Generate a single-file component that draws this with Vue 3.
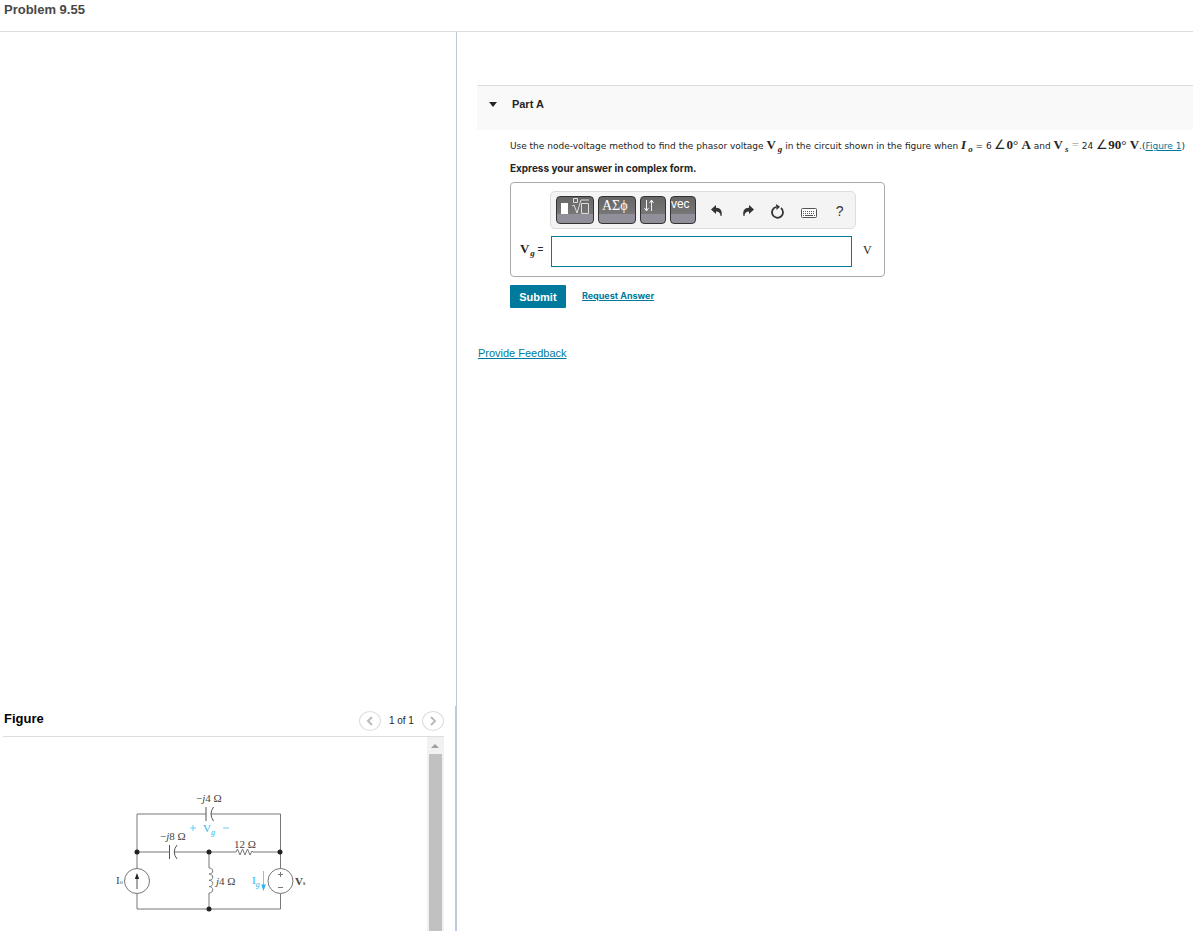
<template>
  <div class="page">
    <header class="page-header">
      <h1>Problem 9.55</h1>
    </header>

    <div class="columns">
      <aside class="left-pane">
        <div class="left-blank"></div>
        <section class="figure-panel">
          <div class="figure-header">
            <h2>Figure</h2>
            <nav class="pager">
              <button type="button" class="pager-btn" aria-label="Previous figure">
                <svg width="8" height="10" viewBox="0 0 8 10"><path d="M6 1 L2 5 L6 9" /></svg>
              </button>
              <span>{{ figureIndex }} of {{ figureCount }}</span>
              <button type="button" class="pager-btn" aria-label="Next figure">
                <svg width="8" height="10" viewBox="0 0 8 10"><path d="M2 1 L6 5 L2 9" /></svg>
              </button>
            </nav>
          </div>
          <div class="figure-body">
            <div class="figure-view">
              <svg class="circuit" width="200" height="130" viewBox="0 0 200 130">
                <g class="wire">
                  <path d="M27 81.500V27H96M101 27H170.500V81.500M27 106.500V122H170.500V106.500" />
                  <path d="M27 65H59.500M64 65H126M143 65H170" />
                  <path d="M126 65l1.500-3 2.500 6 2.500-6 2.500 6 2.500-6 2.500 6 2-4 1 1" />
                  <path d="M99 65V81c5 0 5 6 0 6 5 0 5 6.300 0 6.300 5 0 5 6.300 0 6.300 5 0 5 6.400 0 6.400V122" />
                  <circle cx="27" cy="94" r="12.500" />
                  <circle cx="170.500" cy="94" r="12.500" />
                </g>
                <g class="plate">
                  <path d="M96 20V34M103.500 20Q98.500 27 103.500 34" />
                  <path d="M59.500 58V72M67 58Q61.500 65 67 72" />
                  <path d="M27 102V90" />
                </g>
                <path class="dot" d="M27 86l-2.200 6h4.400z" />
                <circle v-for="node in nodes" :key="node.id" class="dot" :cx="node.x" :cy="node.y" r="2.500" />
                <path class="sign" d="M168 87.500H173M170.500 85V90M168 100.500H173" />
                <g class="label">
                  <text x="86" y="15">−<tspan class="it">j</tspan>4 Ω</text>
                  <text x="50" y="53">−<tspan class="it">j</tspan>8 Ω</text>
                  <text x="124" y="61">12 Ω</text>
                  <text x="106" y="98"><tspan class="it">j</tspan>4 Ω</text>
                  <text x="6" y="97">I<tspan class="sub">o</tspan></text>
                  <text x="185" y="98" class="strong">V<tspan class="sub">s</tspan></text>
                </g>
                <g class="blue">
                  <text x="93" y="45">V<tspan class="it gsub" dy="3">g</tspan></text>
                  <text x="142" y="97">I<tspan class="it gsub" dy="3">g</tspan></text>
                  <path d="M80 41H86M83 38V44M113 41H119M153.500 84V98" />
                  <path class="tip" d="M153.500 104l-2.300-6.500h4.600z" />
                </g>
              </svg>
            </div>
            <div class="scrollbar">
              <div class="scroll-up"></div>
              <div class="scroll-thumb"></div>
            </div>
          </div>
        </section>
      </aside>

      <main class="right-pane">
        <div class="part-header">
          <span class="caret"></span>
          <h2>Part A</h2>
        </div>

        <div class="part-body">
          <p class="question">
            Use the node-voltage method to find the phasor voltage
            <span class="math"><b>V</b><sub>g</sub></span> in the circuit shown in the figure when
            <span class="math"><b><i>I</i></b><sub>o</sub></span> = 6
            <span class="math">∠<b>0</b>° <b>A</b></span> and
            <span class="math"><b>V</b><sub>s</sub> <span class="faint">=</span></span> 24
            <span class="math">∠<b>90</b>° <b>V</b></span>.(<a href="#figure">Figure 1</a>)
          </p>
          <p class="instruction">Express your answer in complex form.</p>

          <form class="answer-box" @submit.prevent>
            <div class="toolbar">
              <button type="button" class="pad wide" aria-label="Templates">
                <svg width="36" height="26" viewBox="0 0 36 26">
                  <rect x="4" y="6" width="7" height="11" fill="#fff" />
                  <path d="M15 9l2-1 3 8 4-13h8M24.500 6.500h7v10h-7zM16.500 1.500h4v4h-4z" fill="none" stroke="#ddd" />
                </svg>
              </button>
              <button type="button" class="pad wide greek">ΑΣϕ</button>
              <button type="button" class="pad narrow" aria-label="Arrows">
                <svg width="24" height="26" viewBox="0 0 24 26">
                  <path d="M5.500 3v11M3.500 11l2 3 2-3M10.500 14V3M8.500 6l2-3 2 3" fill="none" stroke="#eee" />
                </svg>
              </button>
              <button type="button" class="pad narrow vec">vec</button>
              <div class="tools">
                <button type="button" class="tool" aria-label="Undo">
                  <svg width="12" height="14" viewBox="0 0 12 14">
                    <path d="M0 5.500L5 1v2.700c4.500 0 6.500 3 5.500 8.300h-1C9.500 9 8 7.500 5 7.500V10z" fill="#333" />
                  </svg>
                </button>
                <button type="button" class="tool" aria-label="Redo">
                  <svg width="12" height="14" viewBox="0 0 12 14">
                    <path d="M12 5.500L7 1v2.700C2.500 3.700.5 6.700 1.500 12h1C2.500 9 4 7.500 7 7.500V10z" fill="#333" />
                  </svg>
                </button>
                <button type="button" class="tool" aria-label="Reset">
                  <svg width="14" height="16" viewBox="0 0 14 16">
                    <path d="M10 4.500A5.500 5.500 0 1 1 5 3.500" fill="none" stroke="#333" stroke-width="1.800" transform="translate(0 .5)" />
                    <path d="M5 1L9 3.700 5.500 7z" fill="#333" />
                  </svg>
                </button>
                <button type="button" class="tool keyboard" aria-label="Keyboard">
                  <svg width="16" height="10" viewBox="0 0 16 10">
                    <rect x=".5" y=".5" width="15" height="9" rx="1" fill="#fff" stroke="#555" />
                    <path d="M2 3.500h12M2 5.500h12" stroke="#555" stroke-dasharray="1 1" />
                    <path d="M2 7.500h1M4 7.500h8M13 7.500h1" stroke="#555" />
                  </svg>
                </button>
                <button type="button" class="tool help">?</button>
              </div>
            </div>
            <div class="answer-row">
              <label for="answer"><span class="math"><b>V</b><sub>g</sub></span> =</label>
              <input id="answer" v-model="answer" type="text" />
              <span class="unit">V</span>
            </div>
          </form>

          <div class="actions">
            <button type="button" class="submit">Submit</button>
            <a href="#answer">Request Answer</a>
          </div>
        </div>

        <a class="feedback" href="#feedback">Provide Feedback</a>
      </main>
    </div>
  </div>
</template>

<script setup>
import { ref } from 'vue'

const answer = ref('')
const figureIndex = ref(1)
const figureCount = 1

const nodes = [
  { id: 'left', x: 27, y: 65 },
  { id: 'middle', x: 99, y: 65 },
  { id: 'right', x: 170, y: 65 },
  { id: 'ground', x: 99, y: 122 }
]
</script>

<style>
body {
  margin: 0;
  background: #fff;
}
</style>

<style scoped>
.page {
  display: flex;
  flex-direction: column;
  height: 100vh;
  overflow: hidden;
  font-family: "Liberation Sans", Arial, sans-serif;
  font-size: 10px;
  color: #252525;
}

h1,
h2,
p {
  margin: 0;
}

button {
  padding: 0;
  font-family: inherit;
  cursor: pointer;
}

a {
  color: #007a9c;
}

.page-header {
  box-sizing: border-box;
  height: 32px;
  padding: 2px 4px;
  border-bottom: 1px solid #ddd;
}

.page-header h1 {
  font-size: 13px;
  line-height: 16px;
  color: #484848;
}

.columns {
  display: grid;
  grid-template-columns: 38.3% 1fr;
  flex: 1;
  min-height: 0;
}

/* figure side */
.left-pane {
  display: flex;
  flex-direction: column;
  min-height: 0;
}

.left-blank {
  flex: 3;
  border-right: 1px solid #b8cbdb;
}

.figure-panel {
  display: flex;
  flex-direction: column;
  flex: 1;
  padding: 0 11px 0 3px;
  border-right: 2px solid #b8cbdf;
}

.figure-header {
  display: flex;
  justify-content: space-between;
  height: 30px;
  border-bottom: 1px solid #ddd;
}

.figure-header h2 {
  padding-left: 1px;
  font-size: 13px;
  line-height: 26px;
  color: #000;
}

.pager {
  display: flex;
  align-items: center;
  gap: 8px;
  line-height: 20px;
}

.pager-btn {
  display: flex;
  align-items: center;
  justify-content: center;
  width: 22px;
  height: 20px;
  border: 1px solid #ddd;
  border-radius: 50%;
  background: #fff;
}

.pager-btn path {
  fill: none;
  stroke: #bbb;
  stroke-width: 2;
}

.figure-body {
  display: flex;
  flex: 1;
}

.figure-view {
  flex: 1;
  padding: 50px 0 0 107px;
}

.circuit {
  display: block;
  font-family: "Liberation Serif", "Times New Roman", serif;
  font-size: 11px;
}

.wire {
  fill: none;
  stroke: #777;
}

.plate {
  fill: none;
  stroke: #555;
}

.dot {
  fill: #222;
}

.sign {
  stroke: #777;
}

.label {
  fill: #444;
}

.it {
  font-style: italic;
}

.sub {
  font-size: 6px;
}

.gsub {
  font-size: 8px;
}

.strong {
  font-weight: bold;
}

.blue {
  fill: #27b5ea;
}

.blue path {
  stroke: #6fcdf0;
}

.blue .tip {
  stroke: none;
}

.scrollbar {
  display: flex;
  flex-direction: column;
  align-items: center;
  width: 17px;
  background: #f1f1f1;
}

.scroll-up {
  margin: 7px 0 6px;
  border: 4px solid transparent;
  border-top: 0;
  border-bottom-color: #a0a0a0;
}

.scroll-thumb {
  flex: 1;
  width: 13px;
  background: #c1c1c1;
}

/* question side */
.right-pane {
  padding: 53px 0 0 20px;
}

.part-header {
  display: flex;
  box-sizing: border-box;
  height: 45px;
  padding: 11px 12px;
  border-top: 1px solid #ddd;
  background: #f9f9f9;
}

.part-header h2 {
  padding-left: 15px;
  font-size: 11px;
  line-height: 14px;
}

.caret {
  align-self: flex-start;
  margin-top: 5px;
  border: 4px solid transparent;
  border-top: 5px solid #252525;
  border-bottom: 0;
}

.part-body {
  padding: 5px 0 0 33px;
}

.question {
  font-family: "DejaVu Sans", Verdana, sans-serif;
  font-size: 9px;
  line-height: 23px;
  white-space: nowrap;
}

.math {
  font-family: "Liberation Serif", "Times New Roman", serif;
  font-size: 13px;
  line-height: 12px;
}

.math sub {
  position: relative;
  top: 3px;
  padding-left: 1px;
  font-size: 9px;
  font-style: italic;
  font-weight: bold;
  line-height: 9px;
  vertical-align: baseline;
}

.question sub {
  padding-left: 2px;
}

.faint {
  color: #aaa;
}

.instruction {
  font-family: Inter, "Liberation Sans", sans-serif;
  font-weight: bold;
  line-height: 20px;
}

.answer-box {
  box-sizing: border-box;
  width: 375px;
  height: 95px;
  margin-top: 4px;
  padding: 8px 9px 0;
  border: 1px solid #aaa;
  border-radius: 4px;
}

.toolbar {
  display: flex;
  gap: 4px;
  box-sizing: border-box;
  width: 306px;
  height: 38px;
  margin-left: 30px;
  padding: 4px 0 4px 5px;
  border: 1px solid #ddd;
  border-radius: 5px;
  background: #f4f4f4;
}

.pad {
  display: flex;
  flex: none;
  box-sizing: border-box;
  height: 28px;
  border: 1px solid #333;
  border-radius: 4px;
  background: linear-gradient(#666 0, #777 17px, #908f9a 17px, #908f9a 100%);
  color: #fff;
}

.wide {
  width: 38px;
}

.narrow {
  width: 26px;
}

.greek {
  padding-left: 3px;
  font-family: "Liberation Serif", "Times New Roman", serif;
  font-size: 14px;
  line-height: 18px;
}

.vec {
  font-size: 12px;
  line-height: 14px;
}

.tools {
  display: flex;
  flex: 1;
  padding-left: 2px;
}

.tool {
  display: flex;
  flex: 1 1 0;
  align-items: center;
  justify-content: center;
  min-width: 0;
  height: 30px;
  padding: 0;
  border: 0;
  background: none;
  color: #333;
}

.tool.keyboard {
  padding-top: 4px;
}

.help {
  font-size: 14px;
}

.answer-row {
  display: flex;
  margin-top: 7px;
  line-height: 28px;
}

.answer-row label {
  width: 31px;
  white-space: nowrap;
}

.answer-row input {
  box-sizing: border-box;
  width: 301px;
  height: 31px;
  padding: 0 6px;
  border: 1px solid #007a9c;
  outline: 0;
  font-size: 14px;
}

.unit {
  padding-left: 11px;
  font-family: "Liberation Serif", "Times New Roman", serif;
  font-size: 12px;
}

.actions {
  display: flex;
  align-items: center;
  gap: 16px;
  margin-top: 8px;
  font-weight: bold;
}

.actions a {
  padding-bottom: 2px;
  font-family: Inter, "Liberation Sans", sans-serif;
  font-size: 9px;
}

.submit {
  width: 56px;
  height: 23px;
  border: 0;
  border-radius: 1px;
  background: #007a9c;
  color: #fff;
  font-size: 11px;
  font-weight: bold;
}

.feedback {
  display: inline-block;
  margin-top: 38px;
  padding-left: 1px;
  font-size: 11px;
  line-height: 14px;
}
</style>
